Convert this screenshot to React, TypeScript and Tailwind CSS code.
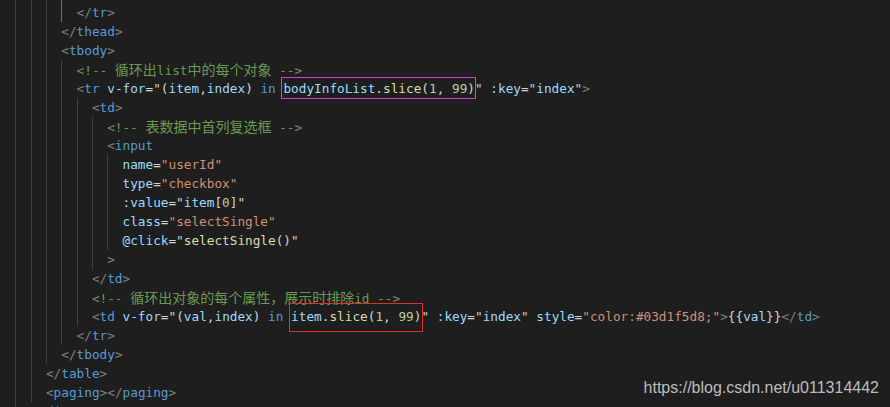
import type { ReactNode } from "react";

// Dark+ token colours, written out so Tailwind picks them up.
const tone = {
  b: "text-[#808080]", // < > </
  t: "text-[#569cd6]", // tag names, keywords
  a: "text-[#9cdcfe]", // attributes, variables
  s: "text-[#ce9178]", // strings
  w: "text-[#d4d4d4]", // punctuation
  c: "text-[#6a9955]", // comments
  f: "text-[#dcdcaa]", // functions
  n: "text-[#b5cea8]", // numbers
} as const;

type Tone = keyof typeof tone;
type Tok = [Tone, string] | { box: "magenta" | "red"; toks: [Tone, string][] };
type Line = { indent: number; toks: Tok[]; active?: number };

const CJK = /([\u3000-\u303f\u4e00-\u9fff\uff00-\uffef]+)/;

function Text({ kind, text }: { kind: Tone; text: string }) {
  let parts = text.split(CJK);
  return (
    <span className={tone[kind]}>
      {parts.map((part, i) =>
        CJK.test(part) ? (
          <span key={i} className="font-['Noto_Sans_CJK_SC',sans-serif] text-[14px]">
            {part}
          </span>
        ) : (
          part
        ),
      )}
    </span>
  );
}

let tag = (name: string, close = false): Tok[] => [
  ["b", close ? "</" : "<"],
  ["t", name],
];
let attr = (name: string, value: string): Tok[] => [
  ["a", name],
  ["w", "="],
  ["s", `"${value}"`],
];

const lines: Line[] = [
  { indent: 10, toks: [...tag("th"), ["b", ">"], ["w", "{{"], ["a", "item"], ["w", "}}"], ...tag("th", true), ["b", ">"]], active: 8 },
  { indent: 10, toks: [...tag("tr", true), ["b", ">"]], active: 8 },
  { indent: 8, toks: [...tag("thead", true), ["b", ">"]] },
  { indent: 8, toks: [...tag("tbody"), ["b", ">"]] },
  { indent: 10, toks: [["c", "<!-- 循环出list中的每个对象 -->"]] },
  {
    indent: 10,
    toks: [
      ...tag("tr"),
      ["w", " "],
      ["a", "v-for"],
      ["w", '="('],
      ["a", "item"],
      ["w", ","],
      ["a", "index"],
      ["w", ") "],
      ["t", "in"],
      ["w", " "],
      {
        box: "magenta",
        toks: [
          ["a", "bodyInfoList"],
          ["w", "."],
          ["f", "slice"],
          ["w", "("],
          ["n", "1"],
          ["w", ", "],
          ["n", "99"],
          ["w", ")"],
        ],
      },
      ["w", '" '],
      ["a", ":key"],
      ["w", '="'],
      ["a", "index"],
      ["w", '"'],
      ["b", ">"],
    ],
  },
  { indent: 12, toks: [...tag("td"), ["b", ">"]] },
  { indent: 14, toks: [["c", "<!-- 表数据中首列复选框 -->"]] },
  { indent: 14, toks: tag("input") },
  { indent: 16, toks: attr("name", "userId") },
  { indent: 16, toks: attr("type", "checkbox") },
  {
    indent: 16,
    toks: [
      ["a", ":value"],
      ["w", '="'],
      ["a", "item"],
      ["w", "["],
      ["n", "0"],
      ["w", ']"'],
    ],
  },
  { indent: 16, toks: attr("class", "selectSingle") },
  {
    indent: 16,
    toks: [
      ["a", "@click"],
      ["w", '="'],
      ["f", "selectSingle"],
      ["w", '()"'],
    ],
  },
  { indent: 14, toks: [["b", ">"]] },
  { indent: 12, toks: [...tag("td", true), ["b", ">"]] },
  { indent: 12, toks: [["c", "<!-- 循环出对象的每个属性，展示时排除id -->"]] },
  {
    indent: 12,
    toks: [
      ...tag("td"),
      ["w", " "],
      ["a", "v-for"],
      ["w", '="('],
      ["a", "val"],
      ["w", ","],
      ["a", "index"],
      ["w", ") "],
      ["t", "in"],
      ["w", " "],
      {
        box: "red",
        toks: [
          ["a", "item"],
          ["w", "."],
          ["f", "slice"],
          ["w", "("],
          ["n", "1"],
          ["w", ", "],
          ["n", "99"],
          ["w", ")"],
        ],
      },
      ["w", '" '],
      ["a", ":key"],
      ["w", '="'],
      ["a", "index"],
      ["w", '" '],
      ...attr("style", "color:#03d1f5d8;"),
      ["b", ">"],
      ["w", "{{"],
      ["a", "val"],
      ["w", "}}"],
      ...tag("td", true),
      ["b", ">"],
    ],
  },
  { indent: 10, toks: [...tag("tr", true), ["b", ">"]] },
  { indent: 8, toks: [...tag("tbody", true), ["b", ">"]] },
  { indent: 6, toks: [...tag("table", true), ["b", ">"]] },
  { indent: 6, toks: [...tag("paging"), ["b", ">"], ...tag("paging", true), ["b", ">"]] },
  { indent: 4, toks: [...tag("div", true), ["b", ">"]] },
];

function Token({ tok }: { tok: Tok }): ReactNode {
  if (Array.isArray(tok)) return <Text kind={tok[0]} text={tok[1]} />;
  let frame =
    tok.box === "magenta"
      ? "-left-[2px] -right-[1px] -top-[2px] -bottom-[1px] border-[#e236e2]"
      : "-left-[2px] -right-[2px] -top-[4px] -bottom-[6px] border-[#e0302c]";
  return (
    <span className="relative inline-block h-[19px]">
      {tok.toks.map((t, i) => (
        <Token key={i} tok={t} />
      ))}
      <span className={`pointer-events-none absolute border ${frame}`} />
    </span>
  );
}

function CodeLine({ line }: { line: Line }) {
  let levels = Array.from({ length: line.indent / 2 }, (_, i) => i * 2);
  return (
    <div className="flex h-[19px] items-center whitespace-pre">
      {levels.map((col) => (
        <span
          key={col}
          className={`h-full w-[2ch] shrink-0 ${
            col === 0 ? "" : col === line.active ? "border-l border-[#707070]" : "border-l border-[#404040]"
          }`}
        />
      ))}
      {line.toks.map((tok, i) => (
        <Token key={i} tok={tok} />
      ))}
    </div>
  );
}

export default function App() {
  return (
    <div className="relative h-[407px] w-[890px] overflow-hidden bg-[#1e1e1e]">
      {/* editor is scrolled: first visible row is cut off at the top */}
      <div className="-mt-[16px] font-['DejaVu_Sans_Mono','Noto_Sans_CJK_SC',monospace] text-[12.72px] leading-[19px]">
        {lines.map((line, i) => (
          <CodeLine key={i} line={line} />
        ))}
      </div>
      <div className="absolute right-[11px] top-[379px] font-['Liberation_Sans',Arial,sans-serif] text-[16px] leading-[18px] text-[#bdbdbd]">
        https://blog.csdn.net/u011314442
      </div>
    </div>
  );
}
